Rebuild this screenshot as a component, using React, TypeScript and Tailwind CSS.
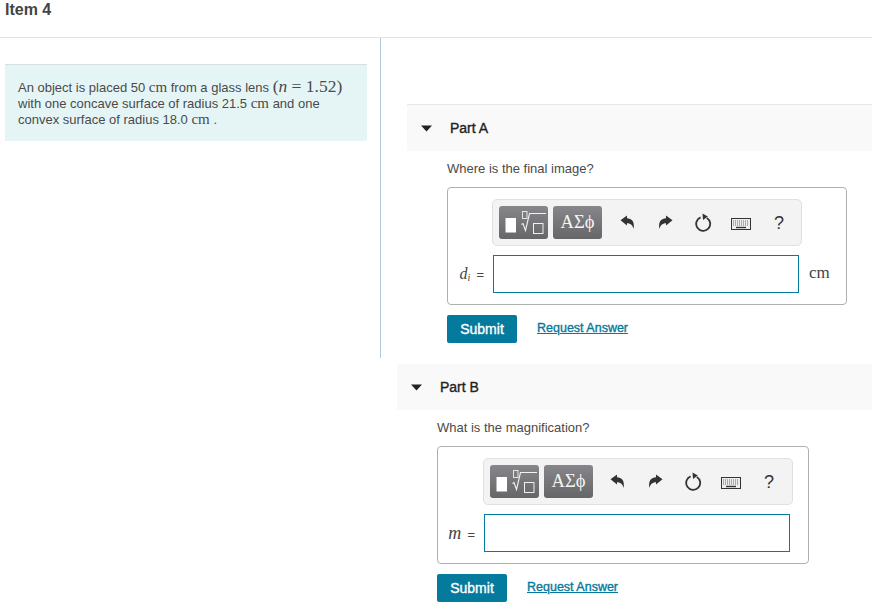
const sans = "font-['Liberation_Sans',Arial,sans-serif]";
const serif = "font-['Liberation_Serif','Times_New_Roman',serif]";
const medium = "[-webkit-text-stroke:0.35px_currentColor]";

function Caret() {
  return (
    <svg width="11" height="7" viewBox="0 0 11 7" className="shrink-0">
      <path d="M0 0.5H11L5.5 6.5Z" fill="#222" />
    </svg>
  );
}

function TemplateIcon() {
  return (
    <svg width="49" height="33" viewBox="0 0 49 33" fill="none">
      <rect x="6.5" y="12" width="10.5" height="14.5" fill="#fff" />
      <rect x="23.5" y="5.5" width="4.5" height="7" stroke="#e4e4e4" strokeWidth="1" />
      <path d="M22.5 18.5L24 17.5L26.5 24.5L30.5 7.5H47" stroke="#f2f2f2" strokeWidth="1.1" />
      <rect x="34.5" y="17.5" width="9.5" height="10" stroke="#f0f0f0" strokeWidth="1" />
    </svg>
  );
}

function Undo() {
  return (
    <svg width="15" height="15" viewBox="0 0 15 15">
      <path d="M0.5 5.3L7 0.5V3.2C11.5 3.2 15 6.5 13.6 14C12.8 10.6 10.8 8.2 7 8.2V10.4Z" fill="#333" />
    </svg>
  );
}

function Redo() {
  return (
    <svg width="15" height="15" viewBox="0 0 15 15">
      <path d="M14.5 5.3L8 0.5V3.2C3.5 3.2 0 6.5 1.4 14C2.2 10.6 4.2 8.2 8 8.2V10.4Z" fill="#333" />
    </svg>
  );
}

function Reset() {
  return (
    <svg width="17" height="19" viewBox="0 0 17 19" fill="none">
      <path d="M5.6 4.4A7 7 0 1 0 11.8 4.9" stroke="#333" strokeWidth="1.8" />
      <path d="M7.5 0.5L12.8 3.6L8 7Z" fill="#333" />
    </svg>
  );
}

function Keyboard() {
  return (
    <svg width="20" height="12" viewBox="0 0 20 12" fill="none" className="mt-[2px]">
      <rect x="0.5" y="0.5" width="19" height="11" fill="#eee" stroke="#333" />
      <path d="M2 3H18M2 5H18M2 7H18" stroke="#666" strokeWidth="1" strokeDasharray="1 1" />
      <path d="M5 9.5H15" stroke="#333" strokeWidth="1.4" />
    </svg>
  );
}

function Toolbar({ gap }: { gap: string }) {
  const slots = [<Undo key="u" />, <Redo key="r" />, <Reset key="s" />, <Keyboard key="k" />, <span key="q" className={`text-[18px] leading-none text-[#333] ${sans}`}>?</span>];
  return (
    <div className="flex h-[47px] w-[310px] items-center rounded-[5px] border border-[#e0e0e0] bg-[#f3f3f3] pl-[6px]">
      <div className="h-[33px] w-[49px] rounded-[3px] bg-gradient-to-b from-[#87878b] to-[#666669]">
        <TemplateIcon />
      </div>
      <div className={`ml-[5px] flex h-[33px] w-[49px] items-center justify-center rounded-[3px] bg-gradient-to-b from-[#87878b] to-[#666669] text-[18.5px] text-[#f4f4f4] ${serif}`}>
        ΑΣϕ
      </div>
      <div className={`flex items-center ${gap}`}>
        {slots.map((s, i) => (
          <div key={i} className="flex w-[38px] justify-center">
            {s}
          </div>
        ))}
      </div>
    </div>
  );
}

function Answer({ label, sub, unit, width, toolbarMargin, inputWidth, gap, labelWidth, labelSize }: { label: string; sub?: string; unit?: string; width: string; toolbarMargin: string; inputWidth: string; gap: string; labelWidth: string; labelSize: string }) {
  return (
    <div className={`mt-[10px] h-[118px] rounded-[4px] border border-[#b0b0b0] pt-[11px] ${width}`}>
      <div className={toolbarMargin}>
        <Toolbar gap={gap} />
      </div>
      <div className="mt-[9px] flex h-[38px] items-center">
        <div className={`pr-[9px] text-right text-[13px] leading-none text-[#444] ${serif} ${labelWidth}`}>
          <i className={labelSize}>{label}</i>
          {sub && <i className="relative top-[2px] text-[10px]">{sub}</i>} <span className={`ml-[3px] ${sans}`}>=</span>
        </div>
        <div className={`h-[38px] border border-[#047a9c] bg-white ${inputWidth}`} />
        {unit && <span className={`relative top-[-1px] ml-[10px] text-[17px] text-[#444] ${serif}`}>{unit}</span>}
      </div>
    </div>
  );
}

function Actions() {
  return (
    <div className={`mt-[10px] flex h-[28px] items-center ${sans}`}>
      <div className={`flex h-[28px] w-[70px] items-center justify-center rounded-[2px] bg-[#047a9c] text-[14px] text-white ${medium}`}>
        Submit
      </div>
      <span className={`relative top-[-1px] ml-[20px] text-[12.5px] text-[#047a9c] underline ${medium}`}>Request Answer</span>
    </div>
  );
}

function M({ children, size = "text-[15px]" }: { children: React.ReactNode; size?: string }) {
  return <span className={`leading-[0] ${size} ${serif}`}>{children}</span>;
}

export default function App() {
  return (
    <div className={`h-[616px] w-[872px] overflow-hidden bg-white text-[#333] ${sans}`}>
      <header className="h-[38px] border-b border-[#e0e3e6] pt-[1px] pl-[5px]">
        <h1 className="text-[16px] leading-[18px] font-bold text-[#444]">Item 4</h1>
      </header>
      <div className="flex h-[320px]">
        <div className="h-full w-[381px] border-r border-[#b4c9dc] pt-[26px] pl-[5px]">
          <div className="h-[77px] w-[362px] border-t border-[#d8dfe0] bg-[#e5f5f6] pt-[15px] pl-[13px] text-[13px] leading-[16px] text-[#4a4a4a]">
            An object is placed 50 <M>cm</M> from a glass lens <M size="text-[17.5px]">(<i>n</i> = 1.52)</M>
            <br />
            with one concave surface of radius 21.5 <M>cm</M> and one
            <br />
            convex surface of radius 18.0 <M>cm</M> .
          </div>
        </div>
        <section className="ml-[26px] flex-1 pt-[66px]">
          <div className="flex h-[47px] items-center border-t border-[#e6e6e6] bg-[#f9f9f9] pl-[14px]">
            <Caret />
            <span className={`ml-[18px] text-[14px] text-[#222] ${medium}`}>Part A</span>
          </div>
          <div className="pl-[40px]">
            <p className="mt-[10px] text-[13px] leading-[16px] text-[#4a4a4a]">Where is the final image?</p>
            <Answer label="d" sub="i" unit="cm" width="w-[400px]" toolbarMargin="ml-[44px]" inputWidth="w-[306px]" gap="ml-[6px]" labelWidth="w-[45px]" labelSize="text-[16px]" />
            <Actions />
          </div>
        </section>
      </div>
      <section className="ml-[397px] pt-[6px]">
        <div className="flex h-[46px] items-center bg-[#f9f9f9] pl-[14px]">
          <Caret />
          <span className={`ml-[18px] text-[14px] text-[#222] ${medium}`}>Part B</span>
        </div>
        <div className="pl-[40px]">
          <p className="mt-[10px] text-[13px] leading-[16px] text-[#4a4a4a]">What is the magnification?</p>
          <Answer label="m" width="w-[372px]" toolbarMargin="ml-[45px]" inputWidth="w-[306px]" gap="ml-[5px]" labelWidth="w-[46px]" labelSize="text-[18px]" />
          <Actions />
        </div>
      </section>
    </div>
  );
}
